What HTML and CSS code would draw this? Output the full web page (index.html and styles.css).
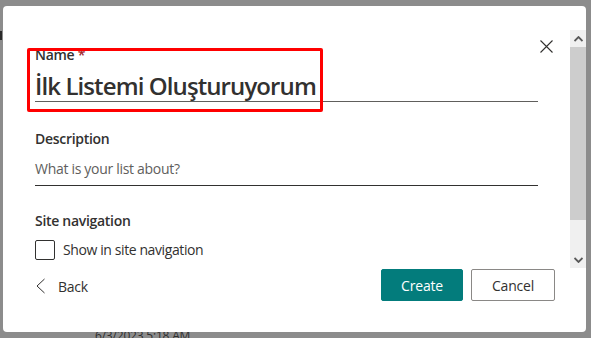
FILE: index.html
```html
<!DOCTYPE html>
<html lang="tr">
<head>
<meta charset="utf-8">
<title>Create list</title>
<link rel="stylesheet" href="styles.css">
</head>
<body>
<div class="backdrop">
  <span class="bg-mark"></span>
  <span class="bg-date">6/3/2023 5:18 AM</span>
</div>
<div class="dialog">
  <div class="dialog-body">
    <div class="content">
      <div class="field">
        <div class="label">Name <span class="req">*</span></div>
        <div class="input input-big">İlk Listemi Oluşturuyorum</div>
      </div>
      <div class="field field-desc">
        <div class="label">Description</div>
        <div class="input input-desc">What is your list about?</div>
      </div>
      <div class="field field-nav">
        <div class="label">Site navigation</div>
        <label class="check">
          <span class="box"></span>
          <span>Show in site navigation</span>
        </label>
      </div>
    </div>
    <div class="scrollbar">
      <div class="sb-btn">
        <svg width="9" height="6" viewBox="0 0 9 6"><path d="M0.5 5 L4.5 1 L8.5 5" fill="none" stroke="#5a5a5a" stroke-width="1.8"/></svg>
      </div>
      <div class="sb-thumb"></div>
      <div class="sb-track"></div>
      <div class="sb-btn">
        <svg width="9" height="6" viewBox="0 0 9 6"><path d="M0.5 1 L4.5 5 L8.5 1" fill="none" stroke="#5a5a5a" stroke-width="1.8"/></svg>
      </div>
    </div>
  </div>
  <div class="footer">
    <button class="back">
      <svg width="10" height="16" viewBox="0 0 10 16"><path d="M8.5 1 L1 8 L8.5 15" fill="none" stroke="#323130" stroke-width="1"/></svg>
      <span>Back</span>
    </button>
    <div class="actions">
      <button class="btn btn-primary">Create</button>
      <button class="btn btn-default">Cancel</button>
    </div>
  </div>
  <button class="close" aria-label="Close">
    <svg width="13" height="13" viewBox="0 0 13 13"><path d="M0.5 0.5 L12.5 12.5 M12.5 0.5 L0.5 12.5" fill="none" stroke="#323130" stroke-width="1.1"/></svg>
  </button>
  <div class="highlight"></div>
</div>
</body>
</html>
```
FILE: styles.css
```css
* { box-sizing: border-box; }
html, body { margin: 0; padding: 0; }
body {
  width: 591px;
  height: 338px;
  overflow: hidden;
  background: #8c8c8c;
  font-family: "Open Sans", "Noto Sans", sans-serif;
  color: #323130;
  position: relative;
}
.backdrop { position: absolute; inset: 0; }
.bg-mark {
  position: absolute; left: 0; top: 31px;
  width: 2px; height: 9px;
  background: #2a2a2a;
}
.bg-date {
  position: absolute; left: 95px; top: 328px;
  font-size: 12px; line-height: 16px; color: #2e2e2e;
  letter-spacing: -0.2px;
}
.dialog {
  position: relative;
  margin: 6px 0 0 3px;
  width: 583px;
  height: 326px;
  background: #fff;
  border-radius: 4px;
  display: flex;
  flex-direction: column;
  overflow: hidden;
}
.dialog-body {
  display: flex;
  height: 262px;
}
.content {
  flex: 1;
  padding: 39px 32px 0 32px;
}
.label {
  font-size: 14px;
  font-weight: 600;
  line-height: 20px;
  height: 20px;
  letter-spacing: -0.3px;
}
.req { color: #a4262c; }
.input {
  border-bottom: 1px solid #605e5c;
}
.input-big {
  margin-top: 5px;
  height: 32px;
  font-size: 24px;
  font-weight: 600;
  line-height: 31px;
  letter-spacing: -0.9px;
  white-space: nowrap;
}
.field-desc { margin-top: 27px; }
.input-desc {
  margin-top: 4px;
  height: 33px;
  font-size: 14px;
  line-height: 32px;
  color: #605e5c;
  border-bottom-color: #323130;
  letter-spacing: -0.3px;
}
.field-nav { margin-top: 25px; }
.check {
  margin-top: 9px;
  display: flex;
  align-items: center;
  gap: 8px;
  font-size: 14px;
  line-height: 20px;
  letter-spacing: -0.4px;
}
.box {
  width: 20px; height: 20px;
  border: 1px solid #323130;
  border-radius: 2px;
}
.scrollbar {
  width: 16px;
  margin-top: 24px;
  display: flex;
  flex-direction: column;
  background: #f0f0f0;
}
.sb-btn {
  height: 17px;
  display: flex;
  align-items: center;
  justify-content: center;
}
.sb-thumb { height: 173px; background: #cdcdcd; }
.sb-track { flex: 1; }
.footer {
  flex: 1;
  display: flex;
  align-items: flex-start;
  justify-content: space-between;
  padding: 1px 31px 0 32px;
}
.back {
  border: 0; background: none; padding: 0;
  display: flex; align-items: center; gap: 12px;
  height: 32px;
  font-family: inherit;
  font-size: 14px;
  color: #323130;
  padding-left: 1px;
  margin-top: 1px;
  letter-spacing: -0.3px;
}
.actions { display: flex; gap: 8px; }
.btn {
  height: 32px;
  border-radius: 2px;
  font-family: inherit;
  font-size: 14px;
  font-weight: 500;
  padding: 0;
  letter-spacing: -0.2px;
}
.btn-primary {
  width: 82px;
  background: #037c7c;
  color: #fff;
  border: 1px solid #037c7c;
}
.btn-default {
  width: 84px;
  background: #fff;
  color: #323130;
  border: 1px solid #8a8886;
}
.close {
  position: absolute;
  left: 537px; top: 34px;
  width: 13px; height: 13px;
  border: 0; background: none; padding: 0;
  display: flex;
}
.highlight {
  position: absolute;
  left: 24px; top: 42px;
  width: 296px; height: 64px;
  border: 3px solid #ff0000;
  border-radius: 2px;
  pointer-events: none;
}
```
